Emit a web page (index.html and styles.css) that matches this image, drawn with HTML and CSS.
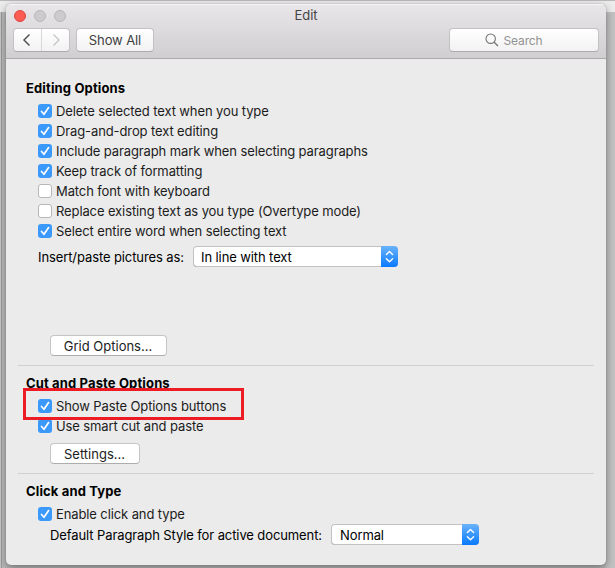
FILE: index.html
```
<!DOCTYPE html>
<html lang="en">
<head>
<meta charset="utf-8">
<title>Edit</title>
<link rel="stylesheet" href="styles.css">
</head>
<body>
<svg class="defs" width="0" height="0">
  <symbol id="tick" viewBox="0 0 14 14"><path d="M3.5 7.5 6 10.3 10.6 3.6" fill="none" stroke="#fff" stroke-width="1.7" stroke-linecap="round" stroke-linejoin="round"/></symbol>
  <symbol id="arrows" viewBox="0 0 17 21"><path d="M5.4 8.5 8.5 5.5l3.1 3M5.4 12.7l3.1 3 3.1-3" fill="none" stroke="#fff" stroke-width="1.4" stroke-linecap="round" stroke-linejoin="round"/></symbol>
</svg>
<main class="window">
  <header class="titlebar">
    <div class="lights"><i class="light close"></i><i class="light"></i><i class="light"></i></div>
    <h1 class="title">Edit</h1>
    <div class="toolbar">
      <div class="nav">
        <span class="nav-item"><svg width="27" height="22"><path d="M15.500 5.500 10 11l5.500 5.500" fill="none" stroke="#555" stroke-width="1.500"/></svg></span>
        <span class="nav-item"><svg width="27" height="22"><path d="M11.500 5.500 17 11l-5.500 5.500" fill="none" stroke="#c4c4c4" stroke-width="1.300"/></svg></span>
      </div>
      <div class="tool-button"><span>Show All</span></div>
      <div class="search"><svg width="14" height="14"><circle cx="5.700" cy="5.700" r="4.700" fill="none" stroke="#747474" stroke-width="1.100"/><path d="m9.200 9.200 3.800 3.800" stroke="#747474" stroke-width="1.300"/></svg><span>Search</span></div>
    </div>
  </header>
  <section class="section editing">
    <h2>Editing Options</h2>
    <label class="option"><i class="box on"><svg><use href="#tick"/></svg></i><span>Delete selected text when you type</span></label>
    <label class="option"><i class="box on"><svg><use href="#tick"/></svg></i><span>Drag-and-drop text editing</span></label>
    <label class="option"><i class="box on"><svg><use href="#tick"/></svg></i><span>Include paragraph mark when selecting paragraphs</span></label>
    <label class="option"><i class="box on"><svg><use href="#tick"/></svg></i><span>Keep track of formatting</span></label>
    <label class="option"><i class="box"></i><span>Match font with keyboard</span></label>
    <label class="option"><i class="box"></i><span>Replace existing text as you type (Overtype mode)</span></label>
    <label class="option"><i class="box on"><svg><use href="#tick"/></svg></i><span>Select entire word when selecting text</span></label>
    <div class="field pictures"><span class="caption">Insert/paste pictures as:</span><div class="select"><span>In line with text</span><svg class="stepper"><use href="#arrows"/></svg></div></div>
    <div class="button grid-button"><span>Grid Options...</span></div>
  </section>
  <section class="section cut">
    <h2>Cut and Paste Options</h2>
    <label class="option"><i class="box on"><svg><use href="#tick"/></svg></i><span>Show Paste Options buttons</span></label>
    <label class="option"><i class="box on"><svg><use href="#tick"/></svg></i><span>Use smart cut and paste</span></label>
    <div class="button settings-button"><span>Settings...</span></div>
    <div class="highlight"></div>
  </section>
  <section class="section click">
    <h2>Click and Type</h2>
    <label class="option"><i class="box on"><svg><use href="#tick"/></svg></i><span>Enable click and type</span></label>
    <div class="field style"><span class="caption">Default Paragraph Style for active document:</span><div class="select"><span>Normal</span><svg class="stepper"><use href="#arrows"/></svg></div></div>
  </section>
</main>
</body>
</html>
```
FILE: styles.css
```
* { box-sizing: border-box; }
body {
  margin: 0;
  height: 568px;
  padding: 4px 9px 3px 6px;
  overflow: hidden;
  background: linear-gradient(#b9b9b9 0 1px, #ececec 1px 12px, transparent 12px),
    linear-gradient(90deg, #c8c8c8 0 1px, #999 1px 2px, #bcbcbc 2px 606px, #c2c2c2 606px);
  font-family: Inter, "Liberation Sans", sans-serif;
  font-size: 13px;
  color: #1c1c1c;
}
.defs { position: absolute; }
.window {
  width: 600px;
  height: 561px;
  border-radius: 5px;
  overflow: hidden;
  background: #ebebeb;
  box-shadow: 0 0 1px #777, 0 3px 9px rgba(0, 0, 0, .4);
}
.titlebar {
  height: 55px;
  padding: 5px 7px 0;
  background: linear-gradient(#e9e6e9, #d1ced1);
  border-top: 1px solid #f5f5f5;
  border-bottom: 1px solid #acaaac;
}
.lights { display: flex; gap: 8px; height: 12px; padding-left: 1px; }
.light { width: 12px; height: 12px; border-radius: 50%; background: #cdcbcd; border: 1px solid #b8b6b8; }
.close { background: #fd5c55; border-color: #df453f; }
.title { margin: -15px 0 0; height: 16px; line-height: 16px; font-size: 13px; font-weight: 400; text-align: center; color: #444; }
.toolbar { display: flex; margin-top: 5px; height: 24px; }
.nav, .tool-button, .search {
  display: flex;
  align-items: center;
  justify-content: center;
  height: 24px;
  border: 1px solid #c3c1c3;
  border-bottom-color: #acaaac;
  border-radius: 4px;
  background: linear-gradient(#fff, #f2f2f2);
}
.nav { width: 57px; }
.nav-item { display: flex; width: 27px; height: 22px; }
.nav-item + .nav-item { width: 28px; border-left: 1px solid #d7d7d7; }
.tool-button { width: 78px; margin-left: 6px; letter-spacing: -.1px; color: #404040; }
.search { width: 150px; margin-left: auto; padding-right: 20px; gap: 4px; font-size: 12px; letter-spacing: -.1px; color: #929292; }
.search span { padding-top: 1px; }
.section { position: relative; margin: 0 12px; padding-left: 8px; }
.section + .section { border-top: 1px solid #d0d0d0; }
.section h2 { margin: 0; height: 23px; line-height: 20px; font-size: 13px; font-weight: 700; letter-spacing: .14px; color: #000; white-space: nowrap; }
.editing { height: 306px; padding-top: 19px; }
.cut { height: 108px; padding-top: 7px; }
.click { padding-top: 7px; }
.option { display: flex; align-items: center; height: 20px; padding-left: 12px; gap: 4px; letter-spacing: -.11px; white-space: nowrap; }
.box { display: block; width: 14px; height: 14px; border-radius: 3px; background: #fff; border: 1px solid #b7b7b7; }
.box svg { display: block; width: 14px; height: 14px; }
.on { border: 0; background: #3b99fc; }
.field { display: flex; align-items: center; height: 21px; letter-spacing: -.1px; color: #000; white-space: nowrap; }
.pictures { margin-top: 5px; padding-left: 12px; }
.pictures .caption { width: 155px; }
.pictures .select { width: 205px; }
.style { padding-left: 24px; }
.style .caption { width: 281px; }
.style .select { width: 148px; }
.select {
  display: flex;
  align-items: center;
  justify-content: space-between;
  height: 21px;
  padding-left: 8px;
  border-radius: 4px;
  background: #fff;
  box-shadow: inset 0 0 0 1px #c2c2c2, inset 0 -1px #a8a8a8;
}
.style .select { padding-left: 9px; }
.stepper { display: block; width: 17px; height: 21px; border-radius: 0 4px 4px 0; background: linear-gradient(#6bb3fa, #087aff); }
.button {
  display: flex;
  align-items: center;
  justify-content: center;
  height: 21px;
  margin-left: 24px;
  padding-right: 1px;
  border: 1px solid #c5c5c5;
  border-bottom-color: #adadad;
  border-radius: 4px;
  background: #fff;
}
.grid-button { width: 117px; margin-top: 68px; }
.settings-button { width: 90px; margin-top: 7px; }
.highlight { position: absolute; left: 5px; top: 22px; width: 221px; height: 32px; border: 3px solid #ed1c24; }
```
